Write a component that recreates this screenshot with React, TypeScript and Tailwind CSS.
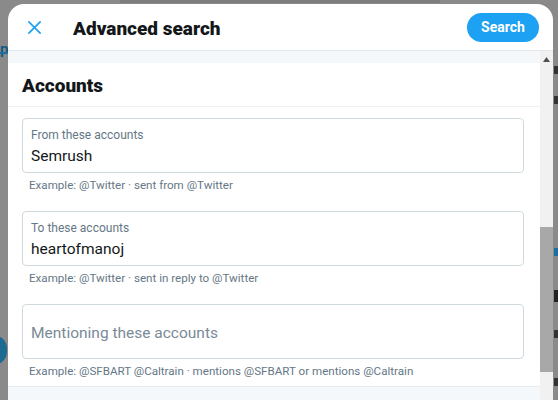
import React from "react";

function Field({ label, value, placeholder, helper }: { label?: string; value?: string; placeholder?: string; helper: string }) {
  return (
    <div className="flex flex-col">
      <div className="h-[55px] rounded-[4px] border border-[#cfd9de] px-[8px] flex flex-col justify-center">
        {label ? (
          <div className="pt-[3px]">
            <div className="text-[12px] leading-[16px] text-[#657786]">{label}</div>
            <div className="text-[15.5px] leading-[22px] text-[#14171a] mt-[2px]">{value}</div>
          </div>
        ) : (
          <div className="text-[15.5px] leading-[22px] text-[#7b8a97] pt-[2px]">{placeholder}</div>
        )}
      </div>
      <div className="text-[11.6px] leading-[16px] text-[#657786] mt-[4px] pl-[7px]">{helper}</div>
    </div>
  );
}

export default function App() {
  return (
    <div
      className="relative w-[558px] h-[400px] overflow-hidden bg-[#8a8a8a]"
      style={{ fontFamily: 'Roboto, "Noto Sans", sans-serif' }}
    >
      {/* underlying page fragments */}
      <div className="absolute left-[120px] top-0 w-[320px] h-[3px] bg-[#7d7d7d]" />
      <div className="absolute left-0 top-[38px] text-[15px] font-bold text-[#135b82]">p</div>
      <div className="absolute left-0 top-[52px] w-[8px] h-[2px] bg-[#1b6f9b]" />
      <div className="absolute left-[-20px] top-[335px] w-[27px] h-[30px] rounded-full bg-[#1b6a92]" />
      <div className="absolute left-[554px] top-[66px] w-[4px] h-[8px] bg-[#333]" />
      <div className="absolute left-[554px] top-[96px] w-[4px] h-[8px] bg-[#333]" />
      <div className="absolute left-[554px] top-[248px] w-[4px] h-[8px] bg-[#1d6fa0]" />
      <div className="absolute left-[554px] top-[290px] w-[4px] h-[12px] bg-[#222]" />
      <div className="absolute left-[554px] top-[330px] w-[4px] h-[8px] bg-[#333]" />
      <div className="absolute left-[554px] top-[378px] w-[4px] h-[8px] bg-[#333]" />

      {/* modal */}
      <div className="absolute left-[8px] top-[4px] w-[545px] h-[420px] bg-white rounded-t-[16px] flex flex-col overflow-hidden">
        <div className="h-[47px] shrink-0 flex items-center border-b border-[#e1e8ed] pl-[14px] pr-[14px]">
          <div className="w-[24px] h-[24px] flex items-center justify-center">
            <svg width="15" height="15" viewBox="0 0 16 16">
              <path d="M2 2 L14 14 M14 2 L2 14" stroke="#1da1f2" strokeWidth="1.8" strokeLinecap="round" />
            </svg>
          </div>
          <div className="ml-[27px] text-[19px] font-black text-[#14171a] mt-[4px]">Advanced search</div>
          <div className="ml-auto w-[72px] h-[29px] mt-[1px] rounded-full bg-[#1da1f2] text-white text-[14px] font-bold flex items-center justify-center">Search</div>
        </div>
        <div className="flex flex-1 min-h-0">
          <div className="flex-1 flex flex-col">
            <div className="h-[12px] bg-[#f5f8fa]" />
            <div className="h-[44px] flex items-center pl-[14px] pt-[4px] border-b border-[#eef1f3]">
              <div className="text-[19px] font-black text-[#14171a]">Accounts</div>
            </div>
            <div className="pl-[14px] pr-[16px] pt-[11px] flex flex-col gap-[18px]">
              <Field label="From these accounts" value="Semrush" helper="Example: @Twitter · sent from @Twitter" />
              <Field label="To these accounts" value="heartofmanoj" helper="Example: @Twitter · sent in reply to @Twitter" />
              <Field placeholder="Mentioning these accounts" helper="Example: @SFBART @Caltrain · mentions @SFBART or mentions @Caltrain" />
            </div>
            <div className="mt-[7px] border-t border-[#e6ecf0] bg-[#f5f8fa] flex-1" />
          </div>
          <div className="w-[13px] bg-[#f1f1f1] relative">
            <svg className="absolute left-[3px] top-[6px]" width="7" height="5" viewBox="0 0 7 5">
              <path d="M0 5 L3.5 0 L7 5 Z" fill="#505050" />
            </svg>
            <div className="absolute left-0 right-0 top-[176px] h-[145px] bg-[#a8a8a8]" />
          </div>
        </div>
      </div>
    </div>
  );
}
